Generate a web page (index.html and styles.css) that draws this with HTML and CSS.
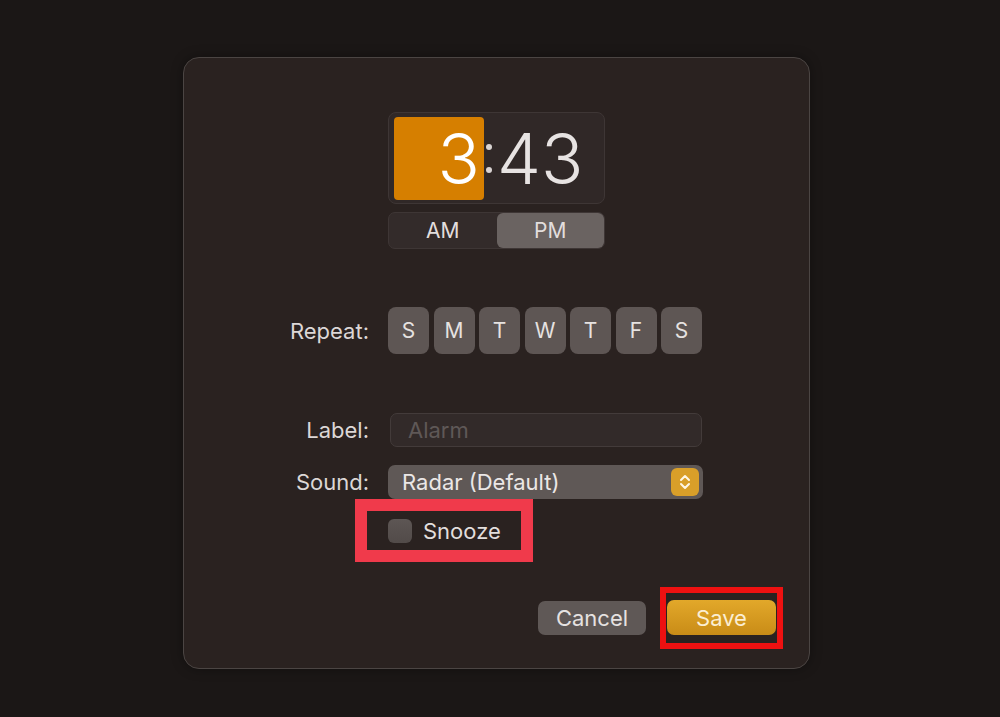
FILE: index.html
```html
<!DOCTYPE html>
<html lang="en">
<head>
    <meta charset="UTF-8">
    <meta name="viewport" content="width=device-width, initial-scale=1.0">
    <title>Edit Alarm</title>
    <link rel="stylesheet" href="styles.css">
</head>
<body>
    <div class="panel">
        <div class="row row-time">
            <span class="row-label"></span>
            <div class="time-box">
                <span class="hour">3</span>
                <span class="colon"><i></i><i></i></span>
                <span class="minutes">43</span>
            </div>
        </div>

        <div class="row row-ampm">
            <span class="row-label"></span>
            <div class="ampm">
                <span class="seg">AM</span>
                <span class="seg selected">PM</span>
            </div>
        </div>

        <div class="row row-repeat">
            <span class="row-label">Repeat:</span>
            <div class="days">
                <button class="day">S</button>
                <button class="day">M</button>
                <button class="day">T</button>
                <button class="day">W</button>
                <button class="day">T</button>
                <button class="day">F</button>
                <button class="day">S</button>
            </div>
        </div>

        <div class="row row-label-field">
            <span class="row-label">Label:</span>
            <input type="text" class="text-field" placeholder="Alarm">
        </div>

        <div class="row row-sound">
            <span class="row-label">Sound:</span>
            <div class="select">
                <span>Radar (Default)</span>
                <span class="stepper">
                    <svg width="14" height="20" viewBox="0 0 14 20">
                        <path d="M3 8 L7 4 L11 8" fill="none" stroke="#fff7e6" stroke-width="2" stroke-linecap="round" stroke-linejoin="round"/>
                        <path d="M3 12 L7 16 L11 12" fill="none" stroke="#fff7e6" stroke-width="2" stroke-linecap="round" stroke-linejoin="round"/>
                    </svg>
                </span>
            </div>
        </div>

        <div class="row row-snooze">
            <span class="row-label"></span>
            <label class="snooze">
                <span class="check"></span>
                <span>Snooze</span>
            </label>
        </div>

        <div class="actions">
            <button class="btn btn-cancel">Cancel</button>
            <span class="save-mark">
                <button class="btn btn-save">Save</button>
            </span>
        </div>
    </div>
</body>
</html>
```

FILE: styles.css
```css
body {
    margin: 0;
    padding: 0;
    background-color: #1b1716;
    font-family: Inter, "Noto Sans", "Liberation Sans", sans-serif;
    color: #dcd7d6;
    height: 717px;
    overflow: hidden;
}

.panel {
    width: 625px;
    height: 610px;
    margin: 57px 0 0 183px;
    background-color: #2a2220;
    border: 1px solid #4b4543;
    border-radius: 16px;
    box-shadow: 0 0 12px rgba(0, 0, 0, 0.35);
}

.row {
    display: flex;
    align-items: center;
}

.row-label {
    width: 185px;
    margin-right: 19px;
    text-align: right;
    font-size: 22px;
    color: #dcd7d6;
}

/* time */
.row-time {
    margin-top: 54px;
}

.time-box {
    width: 205px;
    height: 90px;
    background-color: #302827;
    border: 1px solid #3e3635;
    border-radius: 8px;
    display: flex;
    align-items: center;
    padding: 0 5px;
    box-sizing: content-box;
}

.hour {
    width: 90px;
    height: 83px;
    background-color: #d67f00;
    border-radius: 4px;
    color: #ffffff;
    font-size: 70px;
    font-weight: 300;
    line-height: 83px;
    text-align: right;
    padding-right: 4px;
    box-sizing: border-box;
}

.colon {
    width: 10px;
    height: 83px;
    display: flex;
    flex-direction: column;
    justify-content: center;
    align-items: center;
    gap: 17px;
}

.colon i {
    width: 6px;
    height: 6px;
    border-radius: 50%;
    background-color: #d9d4d3;
}

.minutes {
    font-size: 70px;
    font-weight: 300;
    color: #e7e3e2;
    line-height: 83px;
    padding-left: 3px;
}

/* am pm */
.row-ampm {
    margin-top: 8px;
}

.ampm {
    width: 215px;
    height: 35px;
    background-color: #332b2a;
    border: 1px solid #3e3635;
    border-radius: 7px;
    display: flex;
}

.seg {
    flex: 1;
    display: flex;
    align-items: center;
    justify-content: center;
    font-size: 21px;
    color: #e2dedd;
    border-radius: 6px;
}

.seg.selected {
    background-color: #6a6361;
}

/* repeat */
.row-repeat {
    margin-top: 58px;
}

.days {
    display: flex;
    gap: 4.5px;
}

.day {
    width: 41px;
    height: 47px;
    padding: 0;
    border: none;
    border-radius: 8px;
    background-color: #5e5654;
    color: #e6e2e1;
    font-family: inherit;
    font-size: 21px;
}

/* label */
.row-label-field {
    margin-top: 59px;
}

.text-field {
    width: 312px;
    height: 34px;
    margin-left: 2px;
    box-sizing: border-box;
    background-color: #322a29;
    border: 1px solid #433b3a;
    border-radius: 7px;
    padding: 0 17px;
    font-family: inherit;
    font-size: 22px;
    color: #e6e2e1;
    outline: none;
}

.text-field::placeholder {
    color: #5f5857;
}

/* sound */
.row-sound {
    margin-top: 18px;
}

.select {
    width: 315px;
    height: 34px;
    box-sizing: border-box;
    background-color: #5f5856;
    border-radius: 7px;
    display: flex;
    align-items: center;
    justify-content: space-between;
    padding: 0 4px 0 14px;
    font-size: 22px;
    color: #ebe7e6;
}

.stepper {
    width: 28px;
    height: 28px;
    border-radius: 6px;
    background-color: #d99f29;
    display: flex;
    align-items: center;
    justify-content: center;
}

/* snooze */
.row-snooze {
    margin-top: 12px;
}

.snooze {
    margin-left: -21px;
    width: 154px;
    height: 39px;
    box-sizing: border-box;
    padding-left: 21px;
    display: flex;
    align-items: center;
    gap: 11px;
    font-size: 22px;
    color: #e2dedd;
    outline: 12px solid #f03a4b;
}

.check {
    width: 24px;
    height: 24px;
    border-radius: 6px;
    background: linear-gradient(#5d5654, #524b49);
}

/* buttons */
.actions {
    margin-top: 37px;
    padding-right: 26px;
    display: flex;
    justify-content: flex-end;
    align-items: center;
    gap: 14px;
}

.btn {
    border: none;
    border-radius: 7px;
    font-family: inherit;
    font-size: 22px;
    padding: 0;
    cursor: pointer;
}

.btn-cancel {
    width: 108px;
    height: 34px;
    background-color: #5f5856;
    color: #e6e2e1;
}

.save-mark {
    display: flex;
    border: 6px solid #ee1111;
    padding: 7px 1px 8px 1px;
}

.btn-save {
    width: 109px;
    height: 35px;
    background: linear-gradient(#e2a82a, #c98c17);
    color: #fbeed3;
}
```
